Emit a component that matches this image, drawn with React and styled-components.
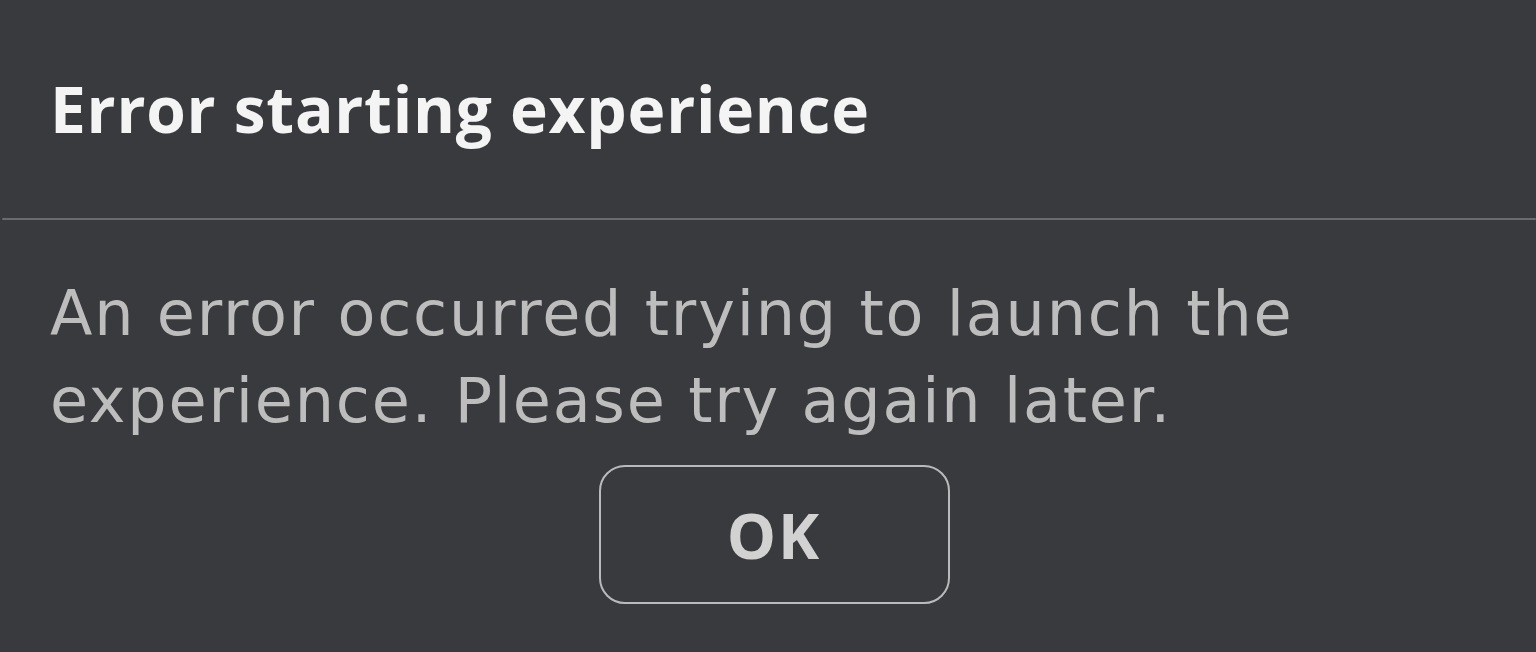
import React from "react";
import styled, { createGlobalStyle } from "styled-components";

const Global = createGlobalStyle`
  html, body { margin: 0; padding: 0; background: #393a3d; }
  body { font-family: "Open Sans", "Liberation Sans", sans-serif; }
  #root { width: 1536px; height: 652px; overflow: hidden; }
`;

const Dialog = styled.div`
  display: flex;
  flex-direction: column;
  width: 1536px;
  height: 652px;
  background: #393a3d;
`;

const Header = styled.header`
  height: 218px;
  display: flex;
  align-items: center;
  padding-left: 50px;
  box-sizing: border-box;
`;

const Title = styled.h1`
  margin: 0;
  font-family: "Open Sans", sans-serif;
  font-weight: 700;
  font-size: 64px;
  letter-spacing: 0.75px;
  color: #f4f4f4;
  line-height: 1;
`;

const Divider = styled.hr`
  margin: 0 0 0 2px;
  border: none;
  height: 2px;
  background: #6a6b6e;
  border-radius: 1px;
`;

const Body = styled.div`
  display: flex;
  flex-direction: column;
  padding: 50px 0 0 50px;
`;

const Message = styled.p`
  margin: 0;
  font-family: "DejaVu Sans", sans-serif;
  font-weight: 400;
  font-size: 62px;
  letter-spacing: 1.8px;
  line-height: 87px;
  color: #bdbdbe;
  width: 1300px;
`;

const Actions = styled.div`
  display: flex;
  justify-content: center;
  width: 1448px;
  padding-top: 21px;
`;

const Button = styled.button`
  width: 351px;
  height: 139px;
  box-sizing: border-box;
  border: 2px solid #b9babb;
  border-radius: 26px;
  background: transparent;
  color: #d2d2d3;
  font-family: "Open Sans", sans-serif;
  font-weight: 700;
  font-size: 62px;
  letter-spacing: 2px;
  cursor: pointer;
`;

export default function App() {
  return (
    <>
      <Global />
      <Dialog>
        <Header>
          <Title>Error starting experience</Title>
        </Header>
        <Divider />
        <Body>
          <Message>
            An error occurred trying to launch the experience. Please try again later.
          </Message>
          <Actions>
            <Button>OK</Button>
          </Actions>
        </Body>
      </Dialog>
    </>
  );
}
